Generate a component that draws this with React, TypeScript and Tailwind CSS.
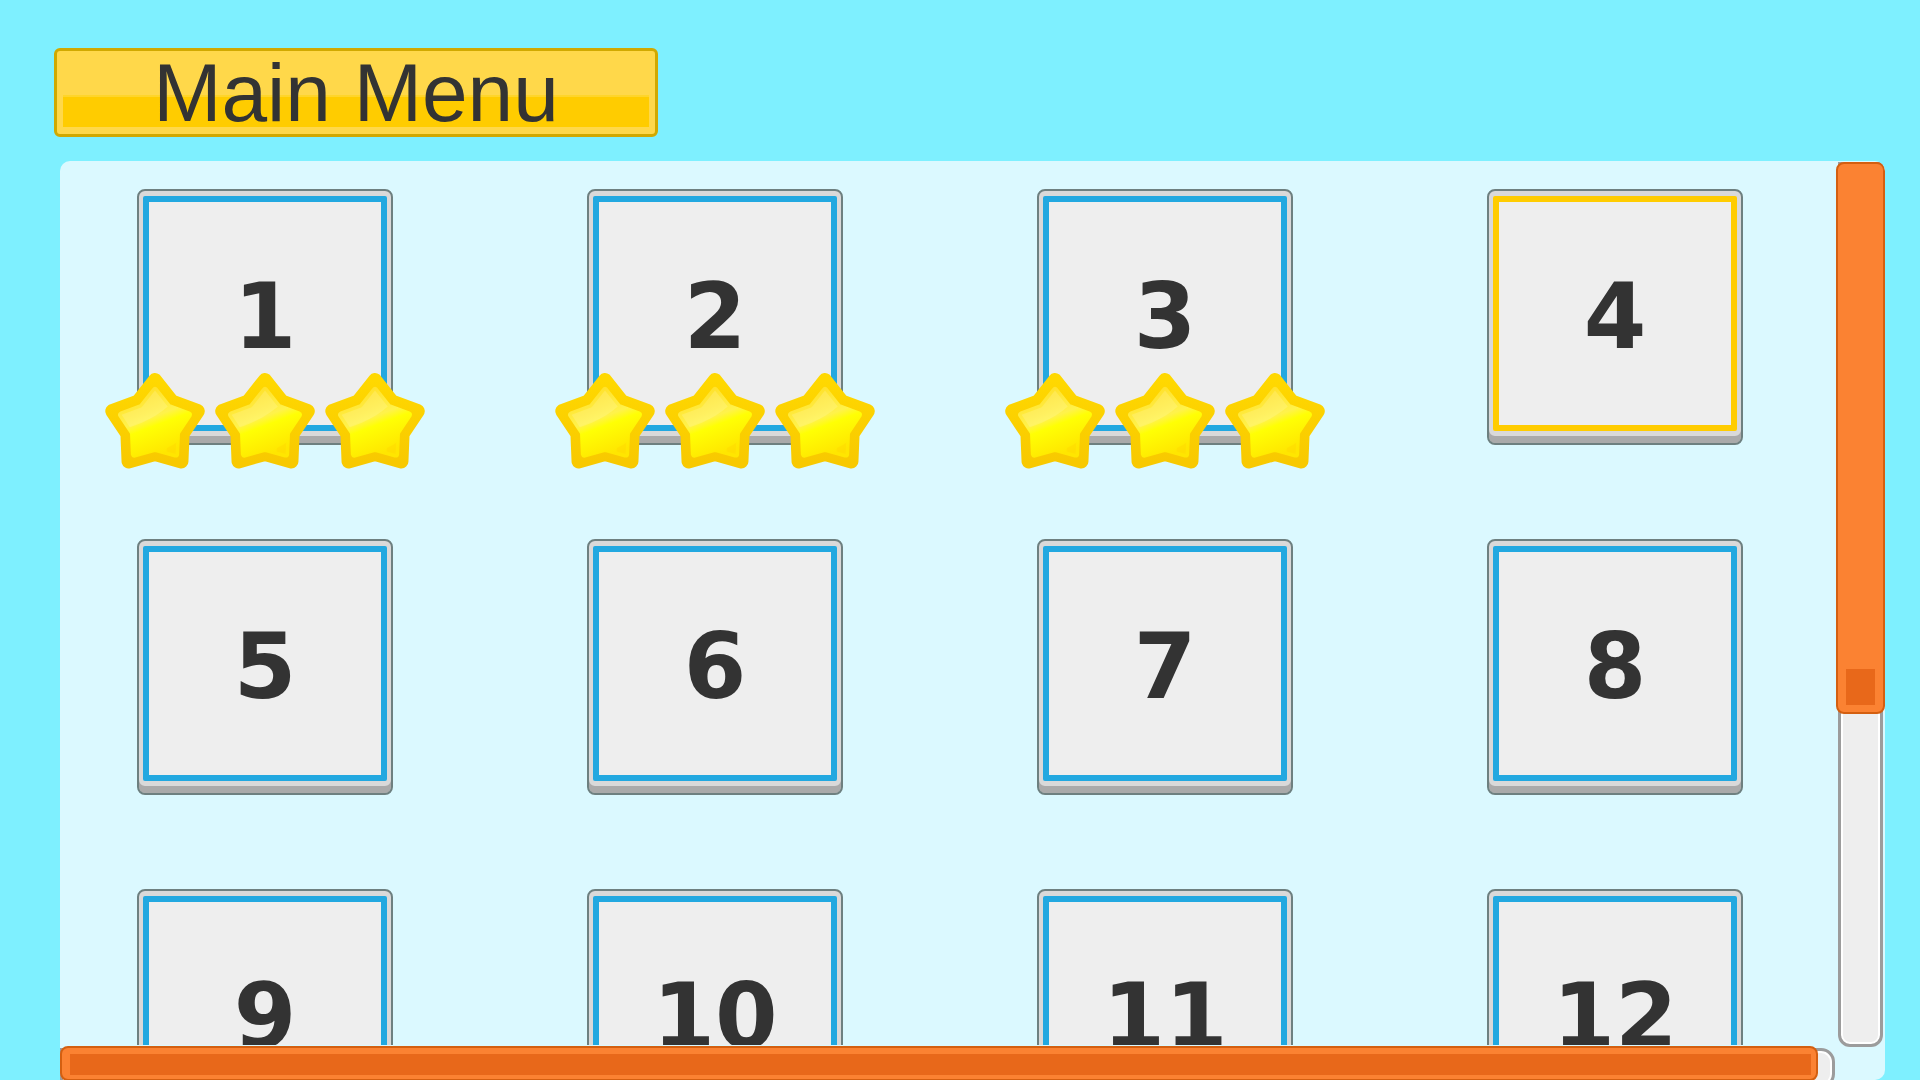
import React from "react";

const STAR_POINTS =
  "50,10 67.05,31.54 92.8,41.09 77.58,63.96 76.45,91.41 50,84 23.55,91.41 22.42,63.96 7.2,41.09 32.95,31.54";

const INNER = "translate(50 58) scale(0.78) translate(-50 -58)";

function Star({ id }: { id: string }) {
  return (
    <svg width="100" height="100" viewBox="0 0 100 100" className="overflow-visible">
      <defs>
        <linearGradient id={`rim-${id}`} x1="0" y1="0" x2="0" y2="1">
          <stop offset="0%" stopColor="#ffd800" />
          <stop offset="100%" stopColor="#f8c900" />
        </linearGradient>
        <linearGradient id={`body-${id}`} x1="0.2" y1="0" x2="0.6" y2="1">
          <stop offset="0%" stopColor="#ffdf28" />
          <stop offset="45%" stopColor="#fff24c" />
          <stop offset="58%" stopColor="#ffff04" />
          <stop offset="100%" stopColor="#ffe600" />
        </linearGradient>
        <clipPath id={`clip-${id}`}>
          <polygon points={STAR_POINTS} transform={INNER} />
        </clipPath>
      </defs>
      <polygon
        points={STAR_POINTS}
        fill={`url(#rim-${id})`}
        stroke={`url(#rim-${id})`}
        strokeWidth="14"
        strokeLinejoin="round"
      />
      <polygon
        points={STAR_POINTS}
        transform={INNER}
        fill={`url(#body-${id})`}
        stroke={`url(#body-${id})`}
        strokeWidth="9"
        strokeLinejoin="round"
      />
      <g clipPath={`url(#clip-${id})`}>
        <path d="M0,62 C25,60 50,50 70,30 L100,20 L100,0 L0,0 Z" fill="#ffffff" opacity="0.15" />
        <path d="M62,78 C75,72 85,62 92,50 L100,50 L100,100 L60,100 Z" fill="#ffd000" opacity="0.3" />
      </g>
    </svg>
  );
}

interface Level {
  n: number;
  stars: number;
  selected?: boolean;
}

const levels: Level[] = [
  { n: 1, stars: 3 },
  { n: 2, stars: 3 },
  { n: 3, stars: 3 },
  { n: 4, stars: 0, selected: true },
  { n: 5, stars: 0 },
  { n: 6, stars: 0 },
  { n: 7, stars: 0 },
  { n: 8, stars: 0 },
  { n: 9, stars: 0 },
  { n: 10, stars: 0 },
  { n: 11, stars: 0 },
  { n: 12, stars: 0 },
];

function LevelTile({ level }: { level: Level }) {
  return (
    <div className="relative w-[256px] h-[256px]">
      {/* tile frame */}
      <div className="w-full h-full rounded-[8px] border-2 border-[#6e8080] bg-[#d9d9d9] shadow-[inset_0_-7px_0_#aaaaaa] pt-[5px] px-[4px] pb-[12px]">
        <div
          className={`w-full h-full rounded-[2px] border-[6px] bg-[#eeeeee] flex items-center justify-center ${
            level.selected ? "border-[#ffcc00]" : "border-[#22a8e0]"
          }`}
        >
          <span className="text-[90px] leading-none font-bold text-[#333333] font-['DejaVu_Sans',sans-serif] mt-[6px]">
            {level.n}
          </span>
        </div>
      </div>

      {/* stars */}
      {level.stars > 0 && (
        <div className="absolute top-[181px] left-[-32px] flex gap-[10px]">
          {Array.from({ length: level.stars }).map((_, i) => (
            <Star key={i} id={`${level.n}-${i}`} />
          ))}
        </div>
      )}
    </div>
  );
}

export default function App() {
  return (
    <div className="w-[1920px] h-[1080px] bg-[#7ef0ff] overflow-hidden font-['Liberation_Sans',Arial,sans-serif]">
      {/* Main Menu button */}
      <div className="pt-[48px] pl-[54px]">
        <button className="relative w-[604px] h-[89px] rounded-[6px] border-[3px] border-[#d1a900] bg-[#ffd84a] overflow-hidden">
          <div className="absolute left-[6px] right-[6px] top-[44px] bottom-[7px] bg-[#ffcc00] border-t-2 border-[#ffd52a]" />
          <span className="relative block text-[82px] leading-none text-[#333333] mt-[1px]">Main Menu</span>
        </button>
      </div>

      {/* Level panel */}
      <div className="mt-[24px] ml-[60px] w-[1825px] h-[919px] bg-[#dbf9ff] rounded-t-[10px] rounded-br-[10px] overflow-hidden flex flex-col">
        <div className="flex h-[886px]">
          {/* grid content */}
          <div className="w-[1776px] h-[884px] overflow-hidden pl-[77px] pt-[28px]">
            <div className="grid grid-cols-[repeat(4,256px)] gap-x-[194px] gap-y-[94px]">
              {levels.map((l) => (
                <LevelTile key={l.n} level={l} />
              ))}
            </div>
          </div>

          {/* vertical scrollbar */}
          <div className="relative w-[49px] pt-[1px]">
            <div className="mx-[2px] h-[885px] rounded-b-[12px] border-[3px] border-[#9c9c9c] bg-[#eeeeee] shadow-[inset_0_0_0_2px_#ffffff]" />
            <div className="absolute top-[1px] left-0 w-[49px] h-[552px] rounded-[8px] border-2 border-[#d45f10] bg-[#fb8232]">
              <div className="absolute left-[8px] top-[505px] w-[29px] h-[36px] bg-[#e8681a]" />
            </div>
          </div>
        </div>

        {/* horizontal scrollbar */}
        <div className="relative -mt-[1px] h-[35px] w-[1776px]">
          <div className="absolute left-0 top-[2px] w-[1775px] h-[40px] rounded-r-[14px] border-[3px] border-[#9c9c9c] bg-[#eeeeee] shadow-[inset_0_0_0_2px_#ffffff]" />
          <div className="absolute left-0 top-0 w-[1758px] h-[35px] rounded-[8px] border-2 border-[#d45f10] bg-[#fb8232] pt-[6px] pl-[8px] pr-[5px]">
            <div className="h-[21px] bg-[#e8681a]" />
          </div>
        </div>
      </div>
    </div>
  );
}
